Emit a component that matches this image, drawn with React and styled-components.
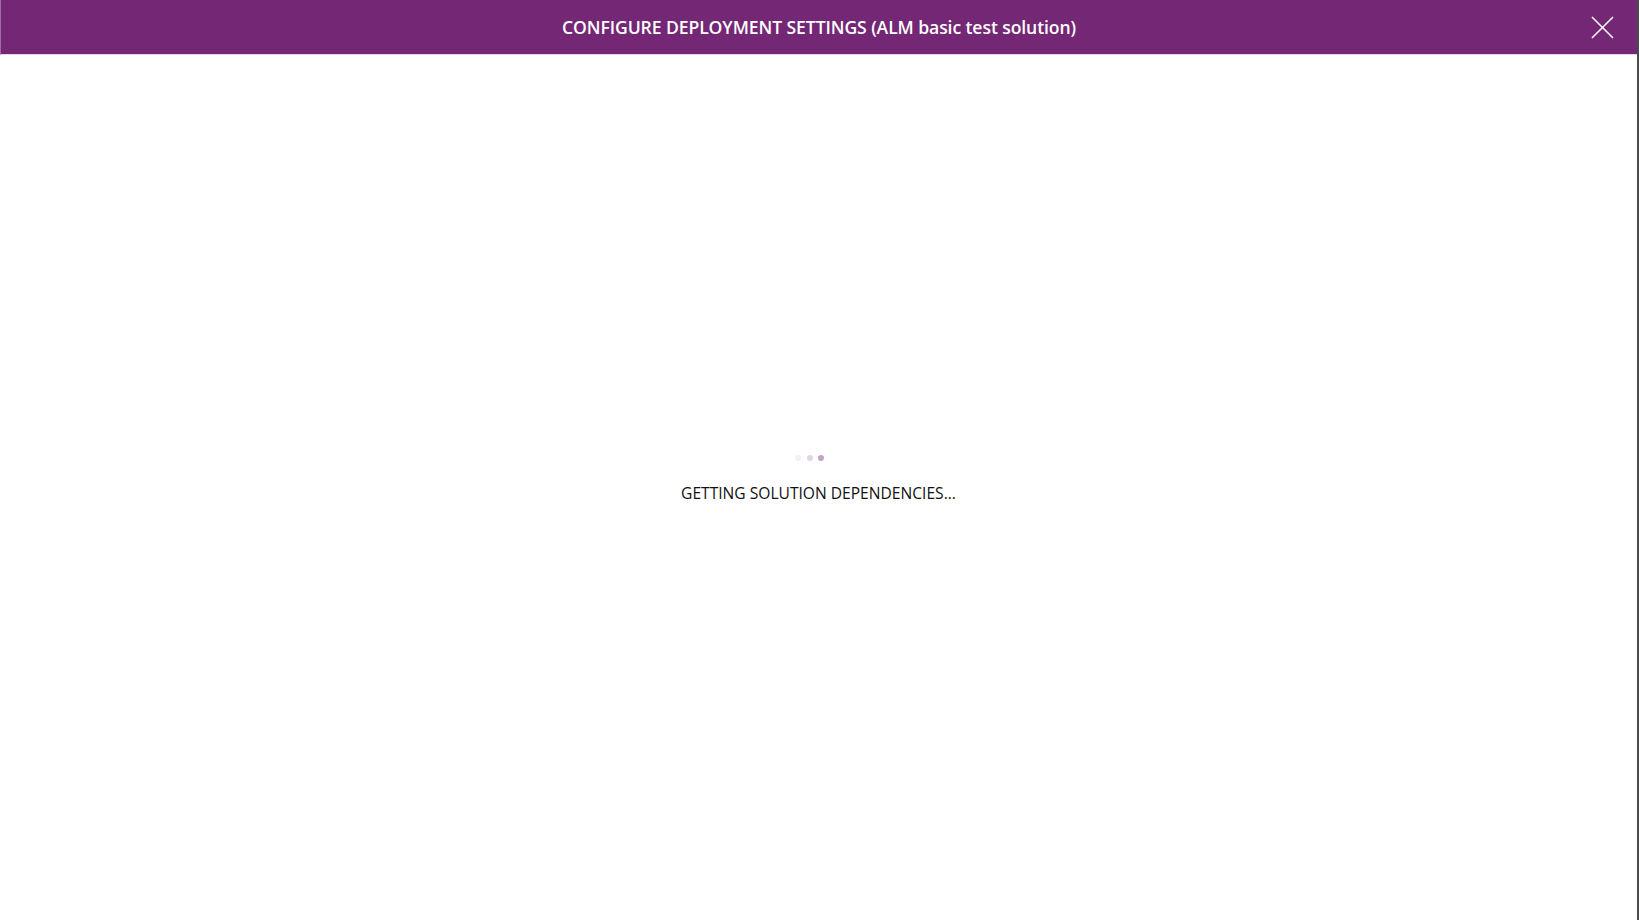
import styled, { createGlobalStyle } from "styled-components";

const GlobalStyle = createGlobalStyle`
  html, body {
    margin: 0;
    padding: 0;
    background: #ffffff;
  }
  * {
    box-sizing: border-box;
  }
`;

const Dialog = styled.div`
  width: 100vw;
  height: 100vh;
  display: flex;
  flex-direction: column;
  background: #ffffff;
  border-right: 2px solid #4b4b4b;
  font-family: "Segoe UI", "Open Sans", "Noto Sans", sans-serif;
`;

const Header = styled.header`
  height: 55px;
  flex: 0 0 55px;
  display: grid;
  grid-template-columns: 60px 1fr 60px;
  align-items: center;
  background: #742774;
  border-left: 1px solid #a06aa0;
  border-bottom: 1px solid #e6d4e6;
  color: #ffffff;
`;

const Title = styled.h1`
  grid-column: 2;
  margin: 0;
  text-align: center;
  font-size: 17.6px;
  font-weight: 600;
  letter-spacing: -0.1px;
`;

const CloseButton = styled.button`
  grid-column: 3;
  justify-self: end;
  margin-right: 23px;
  width: 24px;
  height: 24px;
  padding: 0;
  border: 0;
  background: transparent;
  display: flex;
  align-items: center;
  justify-content: center;
  cursor: pointer;
  svg {
    width: 23px;
    height: 23px;
  }
`;

const Body = styled.main`
  flex: 1;
  display: flex;
  flex-direction: column;
  align-items: center;
  justify-content: center;
  padding-bottom: 16px;
`;

const Dots = styled.div`
  display: flex;
  gap: 5.5px;
  margin-bottom: 21px;
  margin-left: -18px;
`;

const Dot = styled.span`
  width: 6px;
  height: 6px;
  border-radius: 50%;
  background: ${(p) => p.$color};
`;

const Message = styled.p`
  margin: 0;
  font-size: 15.6px;
  color: #111111;
  letter-spacing: 0;
`;

export default function App() {
  return (
    <>
      <GlobalStyle />
      <Dialog>
        <Header>
          <Title>CONFIGURE DEPLOYMENT SETTINGS (ALM basic test solution)</Title>
          <CloseButton aria-label="Close">
            <svg viewBox="0 0 24 24" fill="none" stroke="#ffffff" strokeWidth="1.6">
              <path d="M1 1 L23 23 M23 1 L1 23" />
            </svg>
          </CloseButton>
        </Header>
        <Body>
          <Dots>
            <Dot $color="#f4eff5" />
            <Dot $color="#e4d3e7" />
            <Dot $color="#c7a0ca" />
          </Dots>
          <Message>GETTING SOLUTION DEPENDENCIES...</Message>
        </Body>
      </Dialog>
    </>
  );
}
